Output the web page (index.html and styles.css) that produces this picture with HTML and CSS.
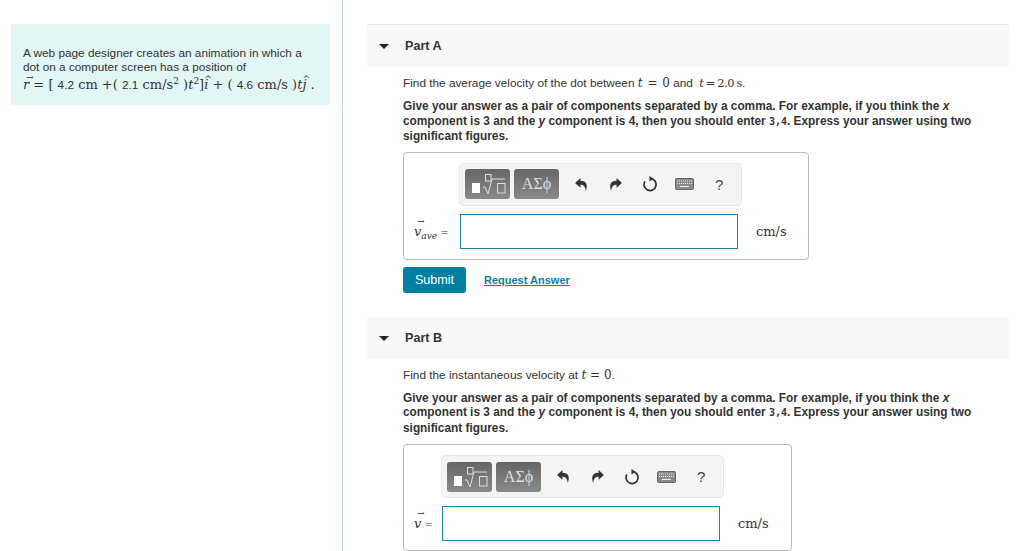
FILE: index.html
```html
<!DOCTYPE html>
<html lang="en">
<head>
  <meta charset="UTF-8">
  <title>Velocity of a dot</title>
  <link rel="stylesheet" href="styles.css">
</head>

<body>
  <div class="page">

    <!-- Problem intro -->
    <div class="left-col">
      <div class="intro">
        <div>A web page designer creates an animation in which a<br>dot on a computer screen has a position of</div>
        <div class="eq intro-eq"><span class="vec">r</span> = [ <span class="num">4.2</span> cm +( <span class="num">2.1</span> cm/s<sup>2</sup> )<i>t</i><sup>2</sup>]<span class="hat">i</span> + ( <span class="num">4.6</span> cm/s )<i>t</i><span class="hat">j</span> .</div>
      </div>
    </div>

    <div class="right-col">

      <!-- Part A -->
      <div class="part-head part-a">
        <span class="caret"></span>
        <b>Part A</b>
      </div>
      <div class="part-body">
        <p class="find">Find the average velocity of the dot between <span class="eq eq-wide"><i>t</i> = 0</span> and <span class="eq eq-tight"><i>t</i> = 2.0 s</span>.</p>
        <p class="give">Give your answer as a pair of components separated by a comma. For example, if you think the <i>x</i> component is 3 and the <i>y</i> component is 4, then you should enter <span class="code">3,4</span>. Express your answer using two significant figures.</p>

        <div class="answer-box box-a">
          <div class="toolbar tb-a">
            <span class="tool-btn">
              <svg width="45" height="30" viewBox="0 0 45 30">
                <rect x="7" y="14" width="8" height="10" fill="#fff"/>
                <rect x="20.500" y="5.500" width="5.500" height="6.500" fill="none" stroke="#ddd"/>
                <path d="M18 18h2l3 7 4-15h13" fill="none" stroke="#ddd"/>
                <rect x="32.500" y="14.500" width="7.500" height="9.500" fill="none" stroke="#ddd"/>
              </svg>
            </span>
            <span class="tool-btn btn-greek">ΑΣϕ</span>
            <span class="tool-icons">
              <span class="icon-cell"><svg width="15" height="15" viewBox="0 0 14 14"><path d="M6 1L1 5.500 6 10V7.200c3 0 4.500 1.300 5 5.800 2-5 1-9.500-5-9.500z" fill="#333"/></svg></span>
              <span class="icon-cell"><svg width="15" height="15" viewBox="0 0 14 14"><path d="M8 1l5 4.500L8 10V7.200c-3 0-4.500 1.300-5 5.800-2-5-1-9.500 5-9.500z" fill="#333"/></svg></span>
              <span class="icon-cell"><svg width="16" height="16" viewBox="0 0 16 16"><path d="M8 2.500a6 6 0 1 1-5.100 2.900" fill="none" stroke="#333" stroke-width="1.700"/><path d="M7.500 0l4 2.700-4 2.800z" fill="#333"/></svg></span>
              <span class="icon-cell"><svg width="19" height="12" viewBox="0 0 19 12"><rect x=".5" y=".5" width="18" height="11" rx="1" fill="#8a8a8a" stroke="#666"/><path d="M2 3h15M2 5.500h15" stroke="#eee" stroke-dasharray="1 1"/><path d="M5 8.500h9" stroke="#eee"/></svg></span>
              <span class="icon-cell help">?</span>
            </span>
          </div>
          <div class="answer-row">
            <span class="label label-a"><span class="vec">v</span><sub>ave</sub> =</span>
            <input class="answer-input" type="text">
            <span class="unit">cm/s</span>
          </div>
        </div>

        <div class="actions">
          <button class="submit">Submit</button>
          <a class="request" href="#">Request Answer</a>
        </div>
      </div>

      <!-- Part B -->
      <div class="part-head part-b">
        <span class="caret"></span>
        <b>Part B</b>
      </div>
      <div class="part-body">
        <p class="find">Find the instantaneous velocity at <span class="eq"><i>t</i> = 0</span>.</p>
        <p class="give">Give your answer as a pair of components separated by a comma. For example, if you think the <i>x</i> component is 3 and the <i>y</i> component is 4, then you should enter <span class="code">3,4</span>. Express your answer using two significant figures.</p>

        <div class="answer-box box-b">
          <div class="toolbar tb-b">
            <span class="tool-btn">
              <svg width="45" height="30" viewBox="0 0 45 30">
                <rect x="7" y="14" width="8" height="10" fill="#fff"/>
                <rect x="20.500" y="5.500" width="5.500" height="6.500" fill="none" stroke="#ddd"/>
                <path d="M18 18h2l3 7 4-15h13" fill="none" stroke="#ddd"/>
                <rect x="32.500" y="14.500" width="7.500" height="9.500" fill="none" stroke="#ddd"/>
              </svg>
            </span>
            <span class="tool-btn btn-greek">ΑΣϕ</span>
            <span class="tool-icons">
              <span class="icon-cell"><svg width="15" height="15" viewBox="0 0 14 14"><path d="M6 1L1 5.500 6 10V7.200c3 0 4.500 1.300 5 5.800 2-5 1-9.500-5-9.500z" fill="#333"/></svg></span>
              <span class="icon-cell"><svg width="15" height="15" viewBox="0 0 14 14"><path d="M8 1l5 4.500L8 10V7.200c-3 0-4.500 1.300-5 5.800-2-5-1-9.500 5-9.500z" fill="#333"/></svg></span>
              <span class="icon-cell"><svg width="16" height="16" viewBox="0 0 16 16"><path d="M8 2.500a6 6 0 1 1-5.100 2.900" fill="none" stroke="#333" stroke-width="1.700"/><path d="M7.500 0l4 2.700-4 2.800z" fill="#333"/></svg></span>
              <span class="icon-cell"><svg width="19" height="12" viewBox="0 0 19 12"><rect x=".5" y=".5" width="18" height="11" rx="1" fill="#8a8a8a" stroke="#666"/><path d="M2 3h15M2 5.500h15" stroke="#eee" stroke-dasharray="1 1"/><path d="M5 8.500h9" stroke="#eee"/></svg></span>
              <span class="icon-cell help">?</span>
            </span>
          </div>
          <div class="answer-row">
            <span class="label label-b"><span class="vec">v</span> =</span>
            <input class="answer-input" type="text">
            <span class="unit">cm/s</span>
          </div>
        </div>
      </div>

    </div>
  </div>
</body>
</html>
```

FILE: styles.css
```css
html, body {
  margin: 0;
  height: 551px;
  overflow: hidden;
  background: #fff;
}

body {
  font-family: "Liberation Sans", Arial, sans-serif;
  font-size: 11.800px;
  color: #333;
}

.page {
  display: flex;
  height: 551px;
}

/* Left column */
.left-col {
  width: 343px;
  flex: none;
  box-sizing: border-box;
  padding: 24px 12px 0 11px;
  border-right: 1px solid #c9d9e2;
}

.intro {
  height: 81px;
  box-sizing: border-box;
  padding: 22px 12px 0 12px;
  background: #e2f6f6;
  line-height: 14px;
}

.eq {
  font-family: "DejaVu Serif", "Liberation Serif", serif;
  font-size: 12px;
}

.eq-wide {
  word-spacing: 1px;
}

.eq-tight {
  margin-left: 3px;
  font-size: 11.500px;
  letter-spacing: -.4px;
  word-spacing: -1px;
}

.intro-eq {
  margin-top: 3px;
  white-space: nowrap;
  font-size: 13px;
  line-height: 16px;
}

.num {
  font-family: "Liberation Sans", Arial, sans-serif;
  font-size: 11.800px;
}

sup {
  font-size: 9px;
  line-height: 0;
}

.vec, .hat {
  position: relative;
  font-style: italic;
}

.vec::before {
  content: "→";
  position: absolute;
  left: 3px;
  top: -8px;
  font-size: 9px;
  font-style: normal;
}

.hat::before {
  content: "^";
  position: absolute;
  left: 0;
  top: -6px;
  font-size: 9px;
  font-style: normal;
}

/* Right column */
.right-col {
  flex: 1;
  padding: 24px 15px 0 24px;
}

.part-head {
  height: 42px;
  display: flex;
  align-items: center;
  background: #f8f8f8;
  font-size: 12.600px;
}

.part-a {
  border-top: 1px solid #e6e6e6;
}

.part-b {
  height: 41px;
  margin-top: 25px;
}

.caret {
  width: 0;
  height: 0;
  margin: 0 16px 0 12px;
  border-left: 5px solid transparent;
  border-right: 5px solid transparent;
  border-top: 5px solid #222;
}

.part-body {
  padding-left: 36px;
}

.find {
  margin: 0;
  padding-top: 8px;
  line-height: 16px;
}

.give {
  margin: 8px 0 0 0;
  width: 600px;
  font-size: 11.850px;
  font-weight: bold;
  line-height: 14.500px;
}

.code {
  font-family: "DejaVu Sans Mono", monospace;
  font-size: 10px;
}

/* Answer box */
.answer-box {
  box-sizing: border-box;
  border: 1px solid #bbb;
  border-radius: 4px;
}

.box-a {
  width: 406px;
  height: 108px;
  margin-top: 8px;
}

.box-b {
  width: 389px;
  height: 107px;
  margin-top: 9px;
}

.toolbar {
  display: flex;
  align-items: center;
  box-sizing: border-box;
  width: 283px;
  height: 43px;
  margin-top: 10px;
  padding: 0 0 0 5px;
  gap: 4px;
  background: #f4f4f4;
  border: 1px solid #e6e6e6;
  border-radius: 5px;
}

.tb-a {
  margin-left: 55px;
}

.tb-b {
  margin-left: 37px;
}

.tool-btn {
  display: flex;
  flex: none;
  align-items: center;
  justify-content: center;
  width: 45px;
  height: 30px;
  border-radius: 3px;
  background: linear-gradient(#666, #8a8a8a);
  color: #ddd;
}

.btn-greek {
  font-family: "Liberation Serif", serif;
  font-size: 16px;
}

.tool-icons {
  display: flex;
  flex: none;
  align-items: center;
  margin-left: 1px;
}

.icon-cell {
  display: flex;
  align-items: center;
  justify-content: center;
  width: 34.500px;
}

.help {
  font-size: 15px;
  color: #444;
}

.answer-row {
  display: flex;
  align-items: center;
  margin-top: 8px;
}

.label {
  box-sizing: border-box;
  padding-left: 10px;
  font-family: "DejaVu Serif", serif;
  font-size: 10px;
}

.label .vec {
  font-size: 13px;
}

.label-a {
  width: 56px;
}

.label-b {
  width: 38px;
}

sub {
  font-size: 9px;
  font-style: italic;
  line-height: 0;
}

.answer-input {
  box-sizing: border-box;
  width: 278px;
  height: 35px;
  margin: 0;
  border: 1px solid #1a87a8;
  background: #fff;
}

.unit {
  margin-left: 18px;
  font-family: "DejaVu Serif", serif;
  font-size: 13px;
}

/* Submit row */
.actions {
  display: flex;
  align-items: center;
  margin-top: 7px;
}

.submit {
  width: 63px;
  height: 26px;
  padding: 1px 0 0 0;
  border: 0;
  border-radius: 3px;
  background: #007fa3;
  color: #fff;
  font-family: "Liberation Sans", Arial, sans-serif;
  font-size: 12.600px;
}

.request {
  margin-left: 18px;
  color: #0a7fa3;
  font-size: 11px;
  font-weight: bold;
}
```
